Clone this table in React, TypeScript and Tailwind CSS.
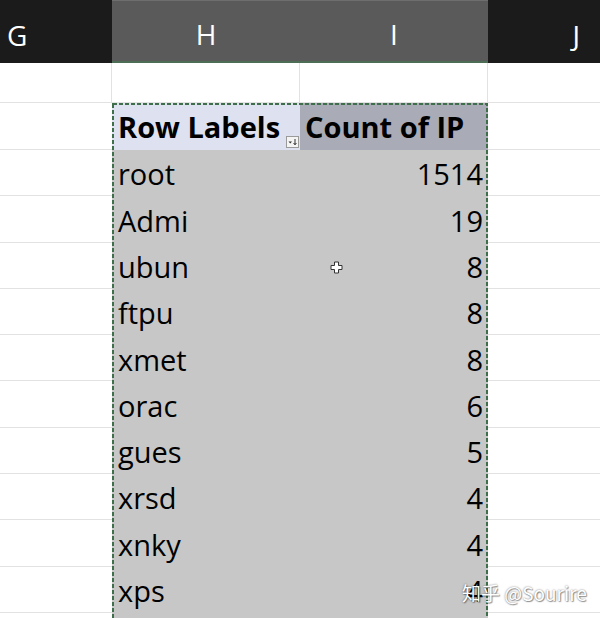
import React from "react";

const rows: [string, string][] = [
  ["root", "1514"],
  ["Admi", "19"],
  ["ubun", "8"],
  ["ftpu", "8"],
  ["xmet", "8"],
  ["orac", "6"],
  ["gues", "5"],
  ["xrsd", "4"],
  ["xnky", "4"],
  ["xps", "4"],
  ["", ""],
];

const font = { fontFamily: "'Open Sans', 'Noto Sans', sans-serif" };

const FilterButton = () => (
  <svg width="13" height="12" viewBox="0 0 13 12" className="mb-[2px]">
    <rect x="0.5" y="0.5" width="12" height="11" fill="#f4f4f4" stroke="#9a9a9a" />
    <path d="M2.5 5.5 L6 5.5 L4.25 7.5 Z" fill="#333" />
    <path d="M9 3 L9 8.5 M7.6 7 L9 8.8 L10.4 7" stroke="#333" strokeWidth="1" fill="none" />
  </svg>
);

const SideColumn = () => (
  <div className="flex w-[112px] flex-col bg-white">
    <div className="h-[47px] border-b border-[#e2e2e2]" />
    {rows.map((_, i) => (
      <div key={i} className="h-[46.3px] shrink-0 border-b border-[#e2e2e2]" />
    ))}
  </div>
);

export default function App() {
  return (
    <div className="relative h-[618px] w-[600px] overflow-hidden bg-white text-black" style={font}>
      {/* column headers */}
      <div className="flex h-[63px] bg-[#1b1b1b] text-[28px] text-white">
        <div className="flex w-[112px] items-center pl-[7px] pt-[6px]">G</div>
        <div className="flex w-[376px] border-b-2 border-t border-b-[#4d6d55] border-t-[#6e6e6e] bg-[#5a5a5a]">
          <div className="flex w-[188px] items-center justify-center pt-[5px]">H</div>
          <div className="flex w-[188px] items-center justify-center pt-[5px]">I</div>
        </div>
        <div className="flex w-[112px] items-center justify-end pr-[20px] pt-[6px]">J</div>
      </div>

      {/* row 1 */}
      <div className="flex h-[40px] border-b border-[#e2e2e2]">
        <div className="w-[112px] border-r border-[#e2e2e2]" />
        <div className="w-[188px] border-r border-[#e2e2e2]" />
        <div className="w-[188px] border-r border-[#e2e2e2]" />
        <div className="w-[112px]" />
      </div>

      {/* pivot area */}
      <div className="flex">
        <SideColumn />
        <div className="relative w-[376px]">
          <div className="flex h-[47px] text-[29px] font-bold">
            <div className="flex w-[188px] items-center justify-between bg-[#dde1f0] pl-[6px] pr-[1px]">
              <span className="pt-[1px]">Row Labels</span>
              <div className="self-end">
                <FilterButton />
              </div>
            </div>
            <div className="flex w-[188px] items-center bg-[#a9abb7] pl-[5px] pt-[1px]">Count of IP</div>
          </div>
          {rows.map(([label, count], i) => (
            <div key={i} className="flex h-[46.3px] shrink-0 bg-[#c7c7c7] text-[29px]">
              <div className="flex w-[188px] items-center pl-[6px] pt-[2px]">{label}</div>
              <div className="flex w-[188px] items-center justify-end pr-[5px] pt-[2px]">{count}</div>
            </div>
          ))}
          {/* marching ants selection */}
          <svg className="pointer-events-none absolute inset-0 h-full w-full" preserveAspectRatio="none">
            <rect
              x="1"
              y="1"
              width="374"
              height="600"
              fill="none"
              stroke="#3e6f4a"
              strokeWidth="2"
              strokeDasharray="4 2"
            />
          </svg>
        </div>
        <SideColumn />
      </div>

      {/* cursor */}
      <svg className="pointer-events-none absolute left-[330px] top-[261px]" width="13" height="13" viewBox="0 0 13 13">
        <path
          d="M4.5 1 H8.5 V4.5 H12 V8.5 H8.5 V12 H4.5 V8.5 H1 V4.5 H4.5 Z"
          fill="#ffffff"
          stroke="#333"
          strokeWidth="1"
        />
      </svg>

      {/* watermark */}
      <div
        className="pointer-events-none absolute left-[462px] top-[579px] text-[19px] text-white"
        style={{
          fontFamily: "'Noto Sans CJK SC', 'Noto Sans', sans-serif",
          textShadow: "0 0 2px rgba(0,0,0,0.55), 1px 1px 1px rgba(0,0,0,0.35)",
        }}
      >
        知乎 @Sourire
      </div>
    </div>
  );
}
